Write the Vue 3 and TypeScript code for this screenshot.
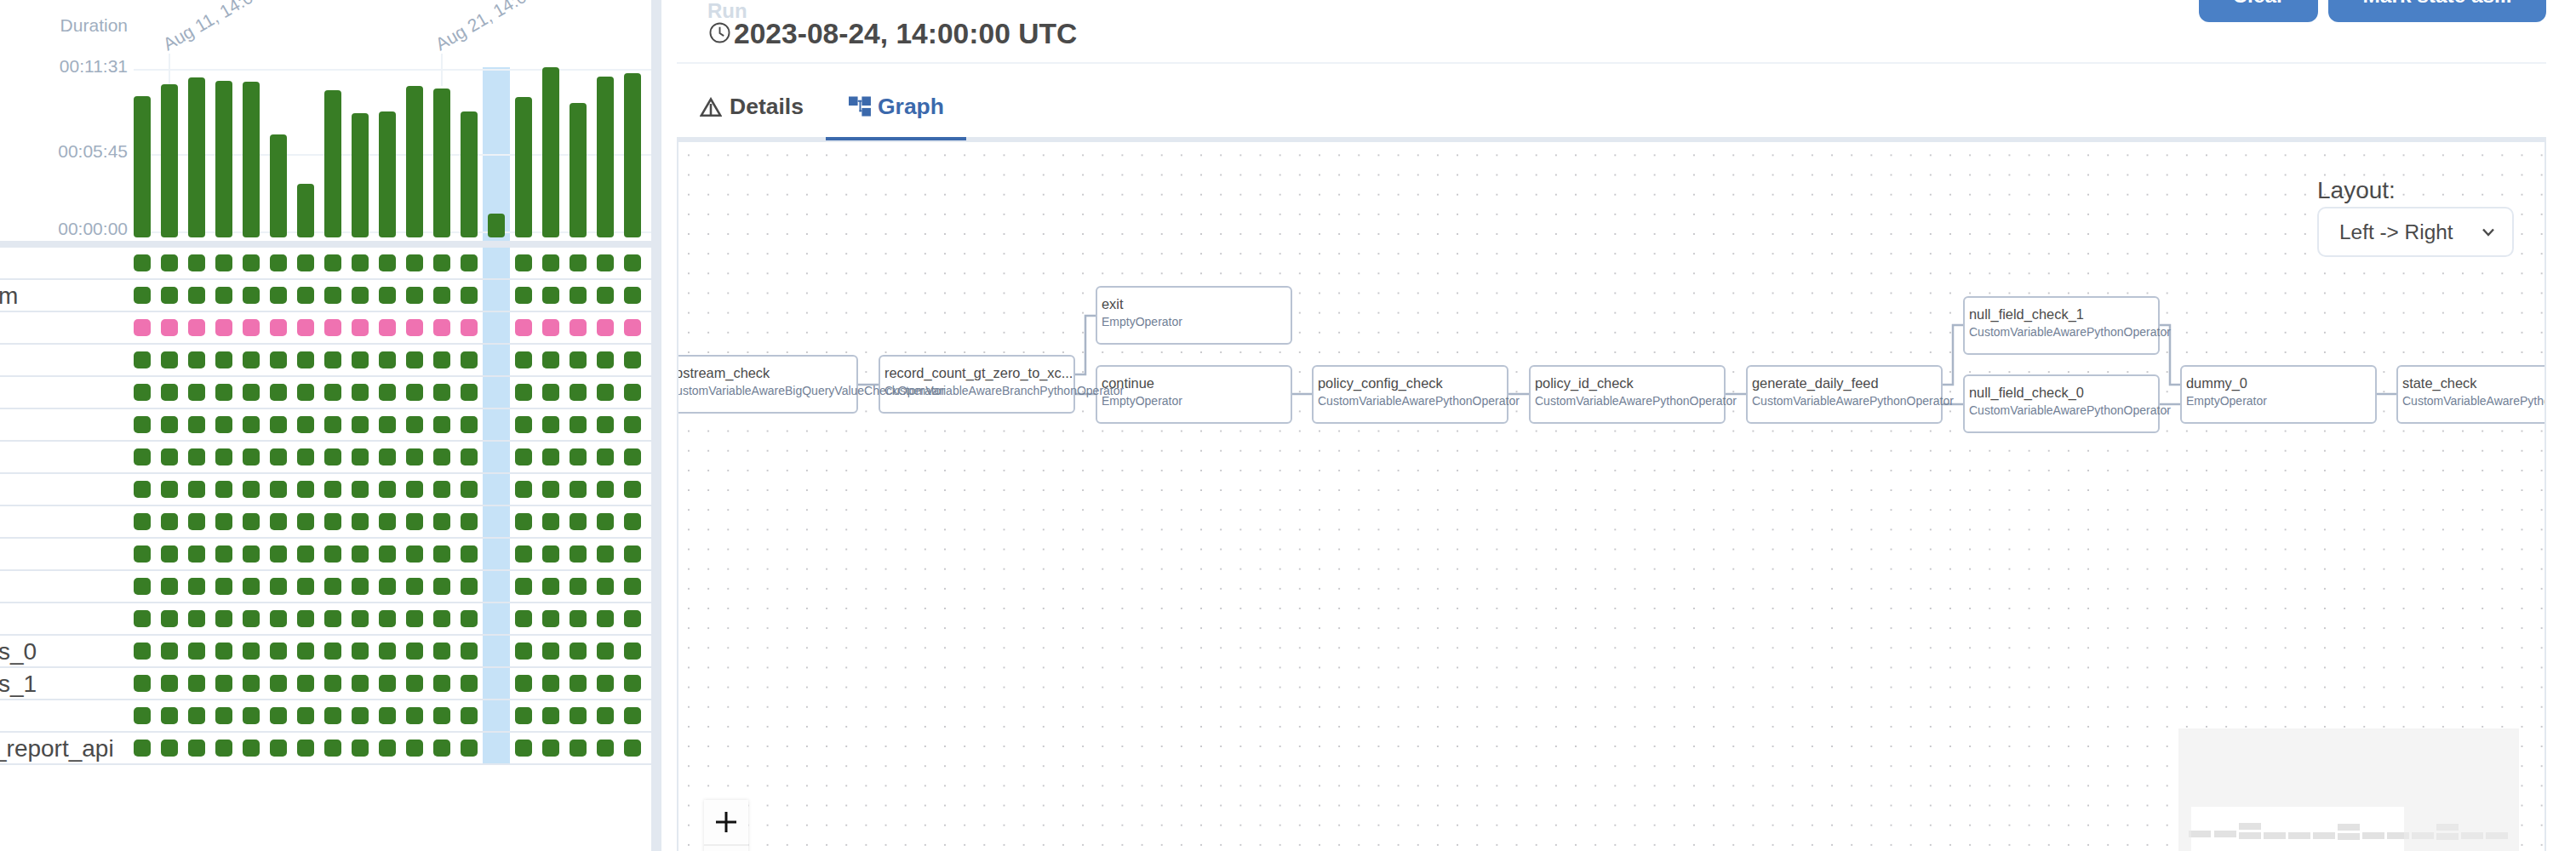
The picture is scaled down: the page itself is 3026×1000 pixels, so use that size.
<script setup lang="ts">
const barTops = [113, 99, 91, 95, 96, 158, 216, 106, 133, 131, 101, 104, 131, 251, 114, 79, 121, 90, 86]
const bars = barTops.map((top, i) => ({ x: 157 + 32 * i, y: top, h: 279 - top }))

const rows = [
  { label: '', off: 0, color: 'ok' },
  { label: 'm', off: -2, color: 'ok' },
  { label: '', off: 0, color: 'skip' },
  { label: '', off: 0, color: 'ok' },
  { label: '', off: 0, color: 'ok' },
  { label: '', off: 0, color: 'ok' },
  { label: '', off: 0, color: 'ok' },
  { label: '', off: 0, color: 'ok' },
  { label: '', off: 0, color: 'ok' },
  { label: '', off: 0, color: 'ok' },
  { label: '', off: 0, color: 'ok' },
  { label: '', off: 0, color: 'ok' },
  { label: 's_0', off: -2, color: 'ok' },
  { label: 's_1', off: -2, color: 'ok' },
  { label: '', off: 0, color: 'ok' },
  { label: '_report_api', off: -8, color: 'ok' }
]
const cols = Array.from({ length: 19 }, (_, i) => i)

const nodes = [
  { x: 777, y: 417, name: 'upstream_check', type: 'CustomVariableAwareBigQueryValueCheckOperator' },
  { x: 1032, y: 417, name: 'record_count_gt_zero_to_xc...', type: 'CustomVariableAwareBranchPythonOperator' },
  { x: 1287, y: 336, name: 'exit', type: 'EmptyOperator' },
  { x: 1287, y: 429, name: 'continue', type: 'EmptyOperator' },
  { x: 1541, y: 429, name: 'policy_config_check', type: 'CustomVariableAwarePythonOperator' },
  { x: 1796, y: 429, name: 'policy_id_check', type: 'CustomVariableAwarePythonOperator' },
  { x: 2051, y: 429, name: 'generate_daily_feed', type: 'CustomVariableAwarePythonOperator' },
  { x: 2306, y: 348, name: 'null_field_check_1', type: 'CustomVariableAwarePythonOperator' },
  { x: 2306, y: 440, name: 'null_field_check_0', type: 'CustomVariableAwarePythonOperator' },
  { x: 2561, y: 429, name: 'dummy_0', type: 'EmptyOperator' },
  { x: 2815, y: 429, name: 'state_check', type: 'CustomVariableAwarePythonOperator' }
].map((n) => ({ ...n, left: n.x - 797, top: n.y - 167 }))

const ox = 797
const oy = 167
const edgePoints = [
  [[1008, 452], [1032, 452]],
  [[1263, 440], [1275, 440], [1275, 371], [1287, 371]],
  [[1263, 463], [1287, 463]],
  [[1517, 463], [1541, 463]],
  [[1772, 463], [1796, 463]],
  [[2027, 463], [2051, 463]],
  [[2282, 452], [2294, 452], [2294, 382], [2306, 382]],
  [[2282, 475], [2306, 475]],
  [[2537, 382], [2549, 382], [2549, 452], [2561, 452]],
  [[2537, 475], [2561, 475]],
  [[2791, 463], [2815, 463]]
]
const edges = edgePoints.map((pts) => pts.map(([x, y]) => `${x - ox},${y - oy}`).join(' '))

const miniBars = [
  [2571, 976], [2601, 976], [2630, 967], [2630, 978], [2659, 978], [2688, 978], [2717, 978],
  [2746, 968], [2746, 979], [2775, 978], [2804, 978], [2833, 978], [2862, 968], [2862, 979],
  [2891, 978], [2920, 978]
].map(([x, y]) => ({ x: x - 2559, y: y - 856 }))
</script>

<template>
  <div class="page">
    <aside class="left">
      <svg class="chart" width="765" height="283" viewBox="0 0 765 283">
        <rect x="567" y="79" width="32" height="204" fill="#c6e2f7" />
        <line x1="157" y1="82" x2="765" y2="82" class="grid" />
        <line x1="157" y1="182" x2="765" y2="182" class="grid" />
        <line x1="157" y1="273" x2="765" y2="273" class="grid" />
        <line x1="199" y1="63" x2="199" y2="99" class="grid" />
        <line x1="519" y1="63" x2="519" y2="101" class="grid" />
        <rect v-for="b in bars" :key="b.x" :x="b.x" :y="b.y" width="20" :height="b.h" rx="4" fill="#387d25" />
        <text x="150" y="37" text-anchor="end" class="axis">Duration</text>
        <text x="150" y="85" text-anchor="end" class="axis">00:11:31</text>
        <text x="150" y="185" text-anchor="end" class="axis">00:05:45</text>
        <text x="150" y="276" text-anchor="end" class="axis">00:00:00</text>
        <text x="197" y="60" transform="rotate(-30 197 60)" class="axis">Aug 11, 14:00</text>
        <text x="517" y="60" transform="rotate(-30 517 60)" class="axis">Aug 21, 14:00</text>
      </svg>
      <div class="rows">
        <div v-for="(row, r) in rows" :key="r" class="row">
          <div class="label">
            <span v-if="row.label" :style="{ marginLeft: row.off + 'px' }">{{ row.label }}</span>
          </div>
          <div v-for="c in cols" :key="c" class="cell" :class="{ picked: c === 13 }">
            <span v-if="c !== 13" class="square" :class="row.color"></span>
          </div>
        </div>
      </div>
    </aside>

    <main class="right">
      <header class="head">
        <div class="run">
          <div class="run-label">Run</div>
          <div class="run-time">
            <svg class="clock" width="25" height="25" viewBox="0 0 24 24" fill="none" stroke="#4a4a4a" stroke-width="1.8">
              <circle cx="12" cy="12" r="10.6" />
              <path d="M12 5.5V12.5L16.5 15.5" />
            </svg>
            <span>2023-08-24, 14:00:00 UTC</span>
          </div>
        </div>
        <div class="actions">
          <button class="btn clear">Clear</button>
          <button class="btn mark">Mark state as...</button>
        </div>
      </header>

      <nav class="tabs">
        <div class="tab">
          <svg width="26" height="23" viewBox="0 0 26 23" fill="none" stroke="#4a4a4a" stroke-width="2.6" stroke-linejoin="miter">
            <path d="M13 2.5L24.2 21.7H1.8Z" />
            <path d="M13 8V21" />
          </svg>
          <span>Details</span>
        </div>
        <div class="tab active">
          <svg width="27" height="24" viewBox="0 0 27 24" fill="#3b69ac">
            <rect x="0" y="0" width="11" height="11" />
            <rect x="16" y="0" width="11" height="11" />
            <rect x="16" y="14" width="11" height="10" />
            <rect x="11" y="4.5" width="5" height="2" />
            <rect x="13" y="4.5" width="2" height="14" />
            <rect x="13" y="16.5" width="3" height="2" />
          </svg>
          <span>Graph</span>
        </div>
      </nav>

      <section class="canvas">
        <svg class="edges" width="2192" height="833">
          <polyline v-for="(e, i) in edges" :key="i" :points="e" />
        </svg>
        <div
          v-for="n in nodes"
          :key="n.name"
          class="node"
          :style="{ left: n.left + 'px', top: n.top + 'px' }"
        >
          <div class="node-name">{{ n.name }}</div>
          <div class="node-type">{{ n.type }}</div>
        </div>

        <div class="layout-picker">
          <div class="layout-label">Layout:</div>
          <div class="select">
            <span>Left -&gt; Right</span>
            <svg width="14" height="10" viewBox="0 0 14 10" fill="none" stroke="#4a4a4a" stroke-width="2.4">
              <path d="M1 1.5L7 8L13 1.5" />
            </svg>
          </div>
        </div>

        <div class="zoom-controls">
          <div class="zoom-btn">
            <svg width="24" height="24" viewBox="0 0 24 24" stroke="#111" stroke-width="3">
              <path d="M0 12H24M12 0V24" />
            </svg>
          </div>
          <div class="zoom-btn"></div>
        </div>

        <svg class="minimap" width="400" height="144" viewBox="0 0 400 144">
          <rect width="400" height="144" fill="#fff" />
          <rect v-for="(m, i) in miniBars" :key="i" :x="m.x" :y="m.y" width="26" height="8" fill="#e2e2e2" />
          <path
            d="M0 0H400V144H0ZM15 92V144H265V92Z"
            fill-rule="evenodd"
            fill="rgba(236,236,236,0.6)"
          />
        </svg>
      </section>
    </main>
  </div>
</template>

<style>
html,
body {
  margin: 0;
  background: #fff;
}
</style>

<style scoped>
.page {
  width: 3026px;
  height: 1000px;
  display: flex;
  overflow: hidden;
  font-family: "Liberation Sans", Arial, sans-serif;
  color: #4a4a4a;
  background: #fff;
}
.left {
  width: 765px;
  flex: none;
  border-right: 12px solid #e2e8f0;
  display: flex;
  flex-direction: column;
}
.chart {
  display: block;
  flex: none;
}
.grid {
  stroke: #edf2f7;
  stroke-width: 2;
}
.axis {
  font-size: 21px;
  fill: #a0aec0;
}
.rows {
  border-top: 8px solid #e2e8f0;
}
.row {
  display: flex;
  height: 36px;
  border-bottom: 2px solid #e2e8f0;
}
.label {
  width: 151px;
  flex: none;
  font-size: 28px;
  line-height: 38px;
  overflow: hidden;
  white-space: nowrap;
  color: #4a4a4a;
}
.cell {
  width: 32px;
  flex: none;
  box-sizing: border-box;
  padding: 8px 6px;
}
.cell.picked {
  background: #c6e2f7;
}
.square {
  display: block;
  width: 20px;
  height: 20px;
  border-radius: 5px;
}
.square.ok {
  background: #387d25;
}
.square.skip {
  background: #ef72b1;
}
.right {
  flex: 1;
  min-width: 0;
  box-sizing: border-box;
  padding: 0 35px 0 18px;
  display: flex;
  flex-direction: column;
}
.head {
  height: 75px;
  box-sizing: border-box;
  flex: none;
  display: flex;
  justify-content: space-between;
  border-bottom: 2px solid #edf2f7;
}
.run {
  padding: 2px 0 0 36px;
}
.run-label {
  font-size: 24px;
  line-height: 22px;
  font-weight: 700;
  color: #d3dce6;
}
.run-time {
  display: flex;
  align-items: flex-start;
  gap: 4px;
  font-size: 33.6px;
  line-height: 32px;
  font-weight: 700;
  color: #4a4a4a;
}
.clock {
  margin-left: 2px;
  margin-top: 2px;
  flex: none;
}
.actions {
  display: flex;
  gap: 12px;
  align-items: flex-start;
}
.btn {
  height: 56px;
  margin-top: -30px;
  border: 0;
  border-radius: 12px;
  background: #4a80c6;
  color: #fff;
  font: 700 24.4px "Liberation Sans", Arial, sans-serif;
  padding: 0 0 6px;
}
.btn.clear {
  width: 140px;
}
.btn.mark {
  width: 256px;
}
.tabs {
  height: 92px;
  flex: none;
  box-sizing: border-box;
  display: flex;
  border-bottom: 6px solid #e2e8f0;
}
.tab {
  height: 90px;
  box-sizing: border-box;
  display: flex;
  align-items: center;
  gap: 9px;
  padding: 14px 26px 0 27px;
  font-size: 26.5px;
  font-weight: 700;
  color: #4a4a4a;
  width: 175px;
  border-bottom: 4px solid transparent;
}
.tab.active {
  width: 165px;
  gap: 8px;
  color: #3b69ac;
  border-bottom-color: #3b69ac;
}
.canvas {
  position: relative;
  flex: 1;
  overflow: hidden;
  border-left: 2px solid #e2e8f0;
  border-right: 2px solid #e2e8f0;
  background-color: #fff;
  background-image: radial-gradient(circle, #c6c6ca 1px, transparent 1.2px);
  background-size: 23.16px 23.16px;
  background-position: 0.4px 3.8px;
}
.edges {
  position: absolute;
  left: 0;
  top: 0;
}
.edges polyline {
  fill: none;
  stroke: #a9b5c7;
  stroke-width: 2.5;
}
.node {
  position: absolute;
  width: 231px;
  height: 69px;
  box-sizing: border-box;
  background: #fff;
  border: 2px solid #b9c3d3;
  border-radius: 6px;
  padding: 9px 0 0 5px;
  white-space: nowrap;
}
.node-name,
.node-type {
  position: relative;
  z-index: 1;
}
.node-name {
  font-size: 16.4px;
  line-height: 20px;
  color: #4a4a4a;
}
.node-type {
  font-size: 14px;
  line-height: 18px;
  margin-top: 2px;
  color: #718096;
}
.layout-picker {
  position: absolute;
  left: 1925px;
  top: 38px;
  z-index: 2;
}
.layout-label {
  font-size: 28px;
  line-height: 38px;
  color: #4a4a4a;
}
.select {
  width: 231px;
  height: 59px;
  box-sizing: border-box;
  background: #fff;
  border: 2px solid #e2e8f0;
  border-radius: 10px;
  display: flex;
  align-items: center;
  justify-content: space-between;
  padding: 0 21px 0 24px;
  font-size: 24.4px;
  color: #4a4a4a;
}
.zoom-controls {
  position: absolute;
  left: 30px;
  top: 773px;
  z-index: 2;
  box-shadow: 0 0 4px rgba(0, 0, 0, 0.12);
}
.zoom-btn {
  width: 52px;
  height: 52px;
  background: #fdfdfd;
  border-bottom: 2px solid #eeeeee;
  display: flex;
  align-items: center;
  justify-content: center;
}
.minimap {
  position: absolute;
  left: 1762px;
  top: 689px;
  z-index: 2;
}
</style>
